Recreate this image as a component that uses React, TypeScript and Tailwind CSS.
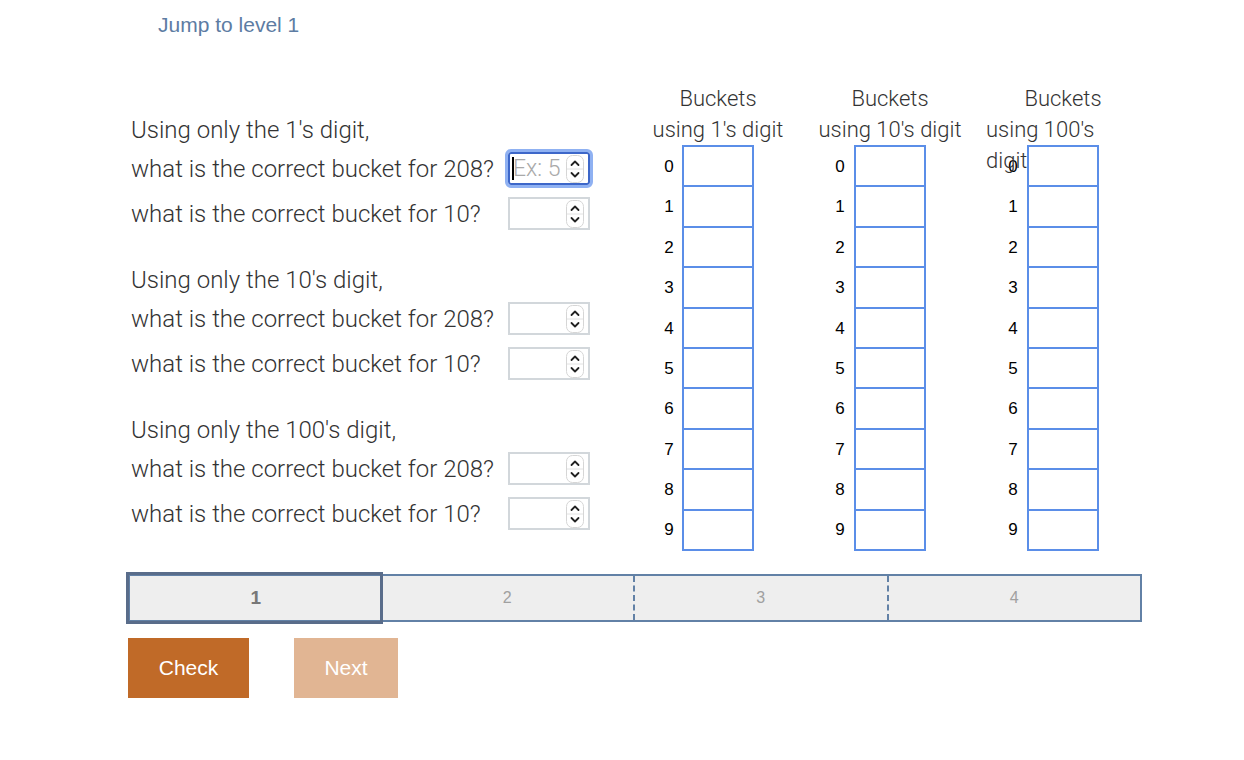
import React from 'react';

const groups = [
  { digit: "1's", focused: true },
  { digit: "10's", focused: false },
  { digit: "100's", focused: false },
];

const Spinner: React.FC = () => (
  <svg width="18" height="28" viewBox="0 0 18 28" className="shrink-0">
    <rect x="0.5" y="0.5" width="17" height="27" rx="6" fill="#fff" stroke="#d6d6d6" />
    <line x1="1" y1="14" x2="17" y2="14" stroke="#e2e2e2" />
    <path d="M5.5 10 L9 6.5 L12.5 10" fill="none" stroke="#222" strokeWidth="1.8" strokeLinecap="round" strokeLinejoin="round" />
    <path d="M5.5 18 L9 21.5 L12.5 18" fill="none" stroke="#222" strokeWidth="1.8" strokeLinecap="round" strokeLinejoin="round" />
  </svg>
);

const NumberBox: React.FC<{ focused?: boolean }> = ({ focused }) => (
  <div
    className={`flex items-center w-[82px] h-[33px] bg-white pr-[4px] ${
      focused
        ? 'border-2 border-[#3d67c9] outline outline-[3px] outline-[#8fb1f2] outline-offset-0 rounded-[3px]'
        : 'border-2 border-[#d2d7db]'
    }`}
  >
    <div className="flex-1 flex items-center pl-[2px] h-full overflow-hidden">
      {focused && <span className="w-[2px] h-[23px] bg-black mr-[-1px] shrink-0" />}
      <input
        type="text"
        placeholder={focused ? 'Ex: 5' : ''}
        className="w-full min-w-0 bg-transparent outline-none text-[23px] leading-none text-[#333] placeholder:text-[#a9a9a9] font-['Roboto',sans-serif] font-light"
      />
    </div>
    <Spinner />
  </div>
);

const BucketColumn: React.FC<{ digit: string; labelW: string; wide?: boolean }> = ({ digit, labelW, wide }) => (
  <div className="flex flex-col">
    <div className="h-[62px] flex">
      <div className={labelW} />
      <div className="w-[72px] flex flex-col items-center text-[22px] leading-[31px] text-[#333] font-['Roboto',sans-serif] font-light">
        <div className="w-[72px] flex justify-center whitespace-nowrap">Buckets</div>
        {wide ? (
          <div className="relative w-[72px] h-[31px]">
            <div className="absolute left-[-41px] top-0 w-[122px] text-left">using {digit} digit</div>
          </div>
        ) : (
          <div className="w-[72px] flex justify-center whitespace-nowrap">using {digit} digit</div>
        )}
      </div>
    </div>
    {Array.from({ length: 10 }).map((_, i) => (
      <div key={i} className="flex h-[40.4px]">
        <div className={`${labelW} flex items-center justify-center pt-[3px] text-[17px] text-black font-['Liberation_Sans',Arial,sans-serif]`}>
          {i}
        </div>
        <div
          className={`w-[72px] border-x-2 border-t-2 border-[#5b8ee8] bg-white ${i === 9 ? 'border-b-2 h-[42.4px]' : ''}`}
        />
      </div>
    ))}
  </div>
);

export default function App() {
  return (
    <div className="min-h-[760px] w-[1244px] bg-white font-['Roboto',sans-serif]">
      <div className="pl-[158px] pt-[10px] h-[83px]">
        <a className="text-[21px] leading-[30px] text-[#5d7ca3] font-['Liberation_Sans',Arial,sans-serif] cursor-pointer">
          Jump to level 1
        </a>
      </div>

      <div className="pl-[128px] flex">
        {/* Questions */}
        <div className="w-[523px] pt-[32px] text-[24px] font-light text-[#333]">
          {groups.map((g, gi) => (
            <div key={gi} className={gi < 2 ? 'mb-[29px]' : ''}>
              <div className="h-[31px] leading-[31px] pl-[3px] whitespace-nowrap">Using only the {g.digit} digit,</div>
              <div className="flex items-center h-[45px]">
                <div className="w-[380px] pl-[3px] whitespace-nowrap">what is the correct bucket for 208?</div>
                <NumberBox focused={g.focused} />
              </div>
              <div className="flex items-center h-[45px]">
                <div className="w-[380px] pl-[3px] whitespace-nowrap">what is the correct bucket for 10?</div>
                <NumberBox />
              </div>
            </div>
          ))}
        </div>

        {/* Buckets */}
        <div className="flex">
          <div className="ml-[5px]">
            <BucketColumn digit="1's" labelW="w-[26px]" />
          </div>
          <div className="ml-[72px]">
            <BucketColumn digit="10's" labelW="w-[28px]" />
          </div>
          <div className="ml-[73px]">
            <BucketColumn digit="100's" labelW="w-[28px]" wide />
          </div>
        </div>
      </div>

      {/* Level progress */}
      <div className="ml-[128px] mt-[25px] w-[1014px] h-[48px] flex border-2 border-[#6281a6] bg-[#eeeeee] font-['Liberation_Sans',Arial,sans-serif] text-[16px]">
        <div className="relative flex-1 flex items-center justify-center font-bold text-[#777] text-[19px]">
          <div className="absolute left-[-4px] top-[-4px] right-[-1px] bottom-[-4px] border-[3px] border-[#596c8a]" />
          1
        </div>
        <div className="flex-1 flex items-center justify-center text-[#a0a0a0]">2</div>
        <div className="flex-1 flex items-center justify-center text-[#a0a0a0] border-l-2 border-dashed border-[#6281a6]">3</div>
        <div className="flex-1 flex items-center justify-center text-[#a0a0a0] border-l-2 border-dashed border-[#6281a6]">4</div>
      </div>

      <div className="ml-[128px] mt-[16px] flex gap-[45px] font-['Liberation_Sans',Arial,sans-serif] text-[21px] text-white">
        <button className="w-[121px] h-[60px] bg-[#c06a28]">Check</button>
        <button className="w-[104px] h-[60px] bg-[#e1b593]">Next</button>
      </div>
    </div>
  );
}
